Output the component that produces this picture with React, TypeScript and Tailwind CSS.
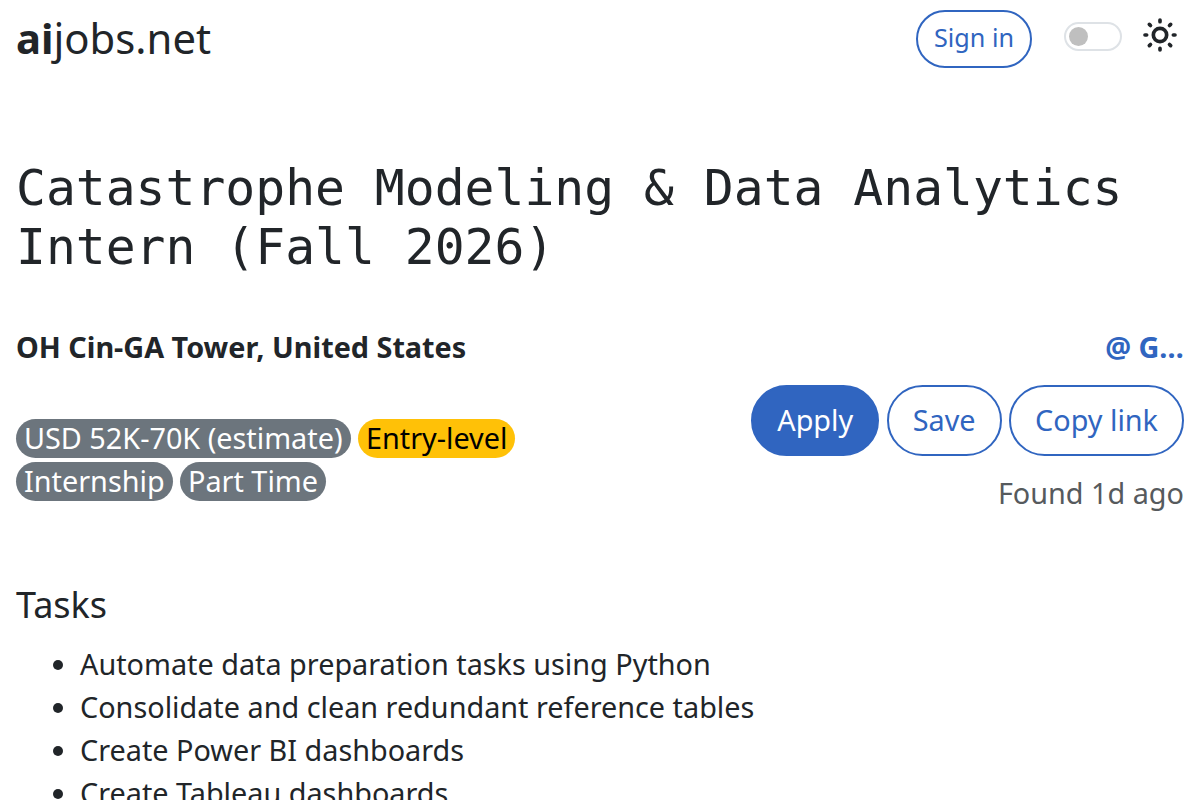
import React from "react";
import clsx from "clsx";

const BADGES = [
  { label: "USD 52K-70K (estimate)", highlight: false },
  { label: "Entry-level", highlight: true },
  { label: "Internship", highlight: false },
  { label: "Part Time", highlight: false },
];

const TASKS = [
  "Automate data preparation tasks using Python",
  "Consolidate and clean redundant reference tables",
  "Create Power BI dashboards",
  "Create Tableau dashboards",
];

const SunIcon = () => (
  <svg
    viewBox="0 0 24 24"
    fill="none"
    stroke="currentColor"
    strokeWidth="2.2"
    strokeLinecap="round"
    strokeLinejoin="round"
    className="size-10"
  >
    <circle cx="12" cy="12" r="4" />
    <path d="M3 12h1m8 -9v1m8 8h1m-9 8v1m-6.4 -15.4l.7 .7m12.1 -.7l-.7 .7m0 11.4l.7 .7m-12.1 -.7l-.7 .7" />
  </svg>
);

const PillButton = ({
  children,
  solid = false,
}: {
  children: React.ReactNode;
  solid?: boolean;
}) => (
  <button
    className={clsx(
      "rounded-[36px] border-2 border-[#3065c0] px-6 pt-[11px] pb-[13px]",
      solid ? "bg-[#3065c0] text-white" : "text-[#3065c0]",
    )}
  >
    {children}
  </button>
);

const Header = () => (
  <header className="flex h-[78px] items-start justify-between">
    <a href="#" className="pt-1.5 text-[41.8px] leading-[63px]">
      <b>ai</b>jobs.net
    </a>
    <div className="flex items-start">
      <button className="mt-[10px] rounded-[29px] border-2 border-[#3065c0] px-4 pt-[7px] pb-[9px] text-[25.2px] leading-[37.8px] text-[#3065c0]">
        Sign in
      </button>
      <div
        role="switch"
        aria-checked="false"
        className="mt-[22px] ml-8 flex h-[29px] w-[58px] items-center rounded-full border-2 border-[#dee2e6] px-[3px]"
      >
        <span className="size-[19px] rounded-full bg-[#bfbfbf]" />
      </div>
      <div className="mt-[15px] mr-1 ml-[18px]">
        <SunIcon />
      </div>
    </div>
  </header>
);

const App = () => {
  return (
    <div className="h-screen overflow-hidden bg-white px-4 font-['Noto_Sans',sans-serif] text-[28.8px] leading-[43.2px] text-[#212529]">
      <Header />
      <main>
        <h1 className="mt-[81px] font-['DejaVu_Sans_Mono',monospace] text-[49.68px] leading-[59.4px]">
          Catastrophe Modeling &amp; Data Analytics Intern (Fall 2026)
        </h1>
        <div className="mt-[47.5px] flex justify-between font-bold">
          <h2>
            OH Cin-GA Tower<span className="-ml-0.5">,</span> United States
          </h2>
          <a href="#" className="text-[#3065c0]">
            @ G…
          </a>
        </div>
        <div className="mt-4 flex items-start justify-between">
          <div className="flex w-[560px] flex-wrap gap-x-[7.4px] gap-y-1 pt-[34.5px]">
            {BADGES.map(({ label, highlight }) => (
              <span
                key={label}
                className={clsx(
                  "h-[39px] rounded-full px-2 leading-[37px]",
                  highlight
                    ? "bg-[#ffc107] text-black"
                    : "bg-[#6c757d] text-white",
                )}
              >
                {label}
              </span>
            ))}
          </div>
          <div className="text-right">
            <div className="flex justify-end gap-[7.5px]">
              <PillButton solid>Apply</PillButton>
              <PillButton>Save</PillButton>
              <PillButton>Copy link</PillButton>
            </div>
            <p className="mt-[15px] text-[#565a5d]">Found 1d ago</p>
          </div>
        </div>
        <h3 className="mt-[69.5px] text-[36px] leading-[43.2px]">Tasks</h3>
        <ul className="mt-[15px] list-disc pl-16">
          {TASKS.map((task) => (
            <li key={task}>{task}</li>
          ))}
        </ul>
      </main>
    </div>
  );
};

export default App;
